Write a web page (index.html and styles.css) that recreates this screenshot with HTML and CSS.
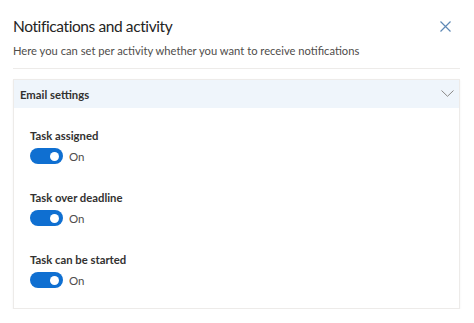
FILE: index.html
```html
<!DOCTYPE html>
<html lang="en">
<head>
    <meta charset="UTF-8">
    <meta name="viewport" content="width=device-width, initial-scale=1.0">
    <title>Notifications and activity</title>
    <link rel="stylesheet" href="styles.css">
</head>
<body>
    <div class="panel">
        <div class="panel-header">
            <h1 class="panel-title">Notifications and activity</h1>
            <button class="close-btn" aria-label="Close">
                <svg width="11" height="11" viewBox="0 0 11 11">
                    <path d="M0.5 0.5 L10.5 10.5 M10.5 0.5 L0.5 10.5" stroke="#5f89b5" stroke-width="1.2" fill="none"/>
                </svg>
            </button>
        </div>
        <p class="panel-desc">Here you can set per activity whether you want to receive notifications</p>
        <div class="divider"></div>

        <!-- Email settings -->
        <div class="section">
            <div class="section-head">
                <span>Email settings</span>
                <svg width="13" height="7" viewBox="0 0 13 7">
                    <path d="M0.5 0.5 L6.5 6.3 L12.5 0.5" stroke="#8a8886" stroke-width="1" fill="none"/>
                </svg>
            </div>
            <div class="section-body">
                <div class="setting">
                    <div class="setting-label">Task assigned</div>
                    <div class="toggle-row">
                        <span class="toggle on"><span class="knob"></span></span>
                        <span class="toggle-text">On</span>
                    </div>
                </div>
                <div class="setting">
                    <div class="setting-label">Task over deadline</div>
                    <div class="toggle-row">
                        <span class="toggle on"><span class="knob"></span></span>
                        <span class="toggle-text">On</span>
                    </div>
                </div>
                <div class="setting">
                    <div class="setting-label">Task can be started</div>
                    <div class="toggle-row">
                        <span class="toggle on"><span class="knob"></span></span>
                        <span class="toggle-text">On</span>
                    </div>
                </div>
            </div>
        </div>
    </div>
</body>
</html>
```

FILE: styles.css
```css
body {
    font-family: "Segoe UI", Lato, sans-serif;
    margin: 0;
    background: #fff;
    color: #323130;
}

.panel {
    padding: 14px 14px 0 13px;
}

.panel-header {
    display: flex;
    align-items: center;
    justify-content: space-between;
}

.panel-title {
    margin: 0;
    font-size: 15.5px;
    font-weight: 400;
    line-height: 24px;
    letter-spacing: -0.4px;
    color: #252423;
}

.close-btn {
    border: 0;
    background: none;
    padding: 0;
    margin-right: 9px;
    display: flex;
}

.panel-desc {
    margin: 5px 0 0;
    font-size: 11.2px;
    line-height: 16px;
    color: #4f4d4b;
}

.divider {
    height: 1px;
    background: #edebe9;
    margin-top: 9px;
}

.section {
    margin-top: 10px;
    border: 1px solid #edebe9;
    box-shadow: 0 1px 2px rgba(0, 0, 0, 0.06);
}

.section-head {
    display: flex;
    align-items: center;
    justify-content: space-between;
    height: 28px;
    padding: 0 5px 0 6px;
    background: #eff5fb;
    font-size: 11.3px;
    font-weight: 700;
    color: #323130;
}

.section-head svg {
    margin-top: -2px;
}

.section-body {
    padding: 20px 16px 20px;
    background: #fff;
}

.setting {
    margin-bottom: 26px;
}

.setting:last-child {
    margin-bottom: 0;
}

.setting-label {
    font-size: 11.3px;
    font-weight: 700;
    line-height: 16px;
    color: #323130;
}

.toggle-row {
    display: flex;
    align-items: center;
    gap: 6px;
    margin-top: 4px;
}

.toggle {
    width: 33px;
    height: 16px;
    border-radius: 8px;
    background: #0f6fd1;
    display: flex;
    align-items: center;
    justify-content: flex-end;
    padding: 0 4px;
    box-sizing: border-box;
}

.knob {
    width: 9px;
    height: 9px;
    border-radius: 50%;
    background: #fff;
}

.toggle-text {
    font-size: 11.5px;
    color: #4f4d4b;
}
```
